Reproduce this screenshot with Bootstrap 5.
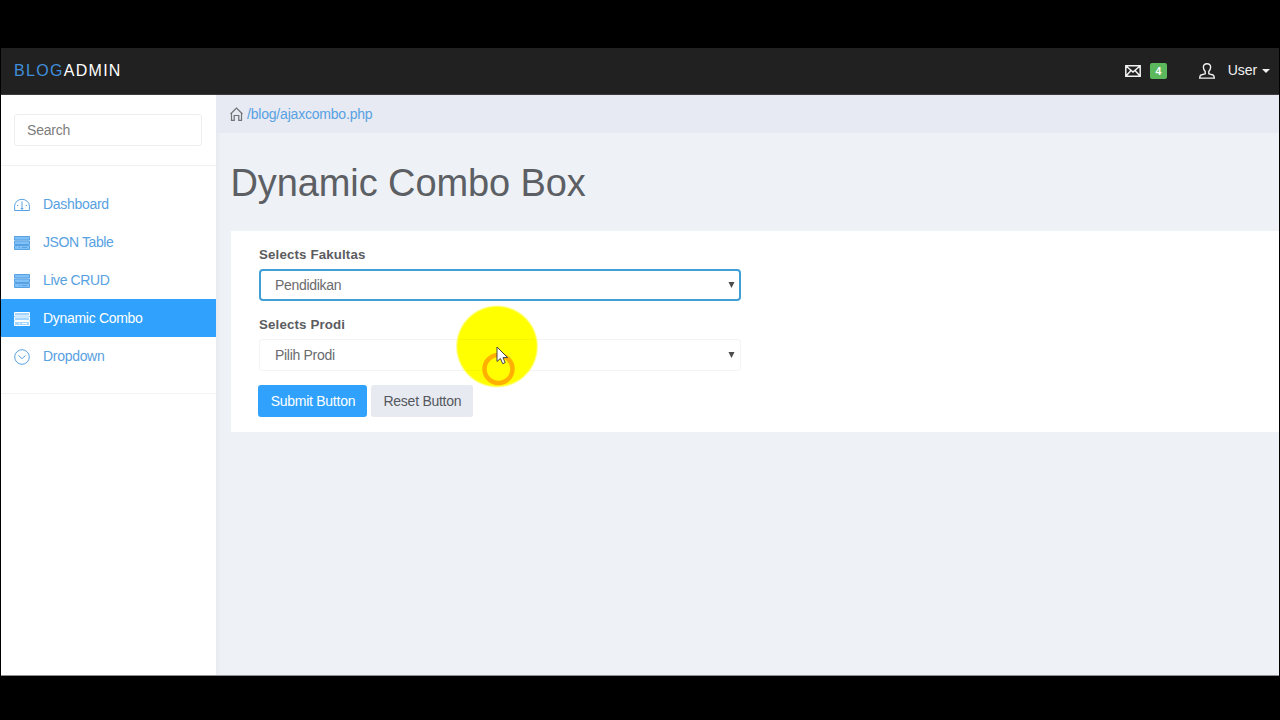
<!DOCTYPE html>
<html lang="en">
<head>
<meta charset="utf-8">
<meta name="viewport" content="width=device-width, initial-scale=1">
<title>Blog Admin - Dynamic Combo Box</title>
<link href="https://cdn.jsdelivr.net/npm/bootstrap@5.3.0/dist/css/bootstrap.min.css" rel="stylesheet">
<style>
body{background:#000;height:720px;overflow:hidden;padding:48px 1px 44px;font:13.6px/20px "Liberation Sans",Arial,sans-serif;letter-spacing:-.06px;color:#58595d}
a{text-decoration:none;color:#58a1e2}
svg{flex:none;display:block}
.app-frame{height:628px;background:#eef1f6;border-bottom:1px solid #8d9090}
.topbar{height:47px;background:#212121;border-bottom:1px solid #3b3b3b;color:#f2f2f2;padding:0 9px 0 13px}
.brand{font-size:16px;letter-spacing:1.3px;color:#fff}
.brand span{color:#408edb}
.tools{margin-top:-2px;font-size:14px;letter-spacing:-.1px}
.count{width:17px;height:16px;border-radius:2px;background:#5cb85c;font-size:10.5px;line-height:16px;color:#fff;font-weight:700;margin:2px 0 0 9px}
.tools .mail{margin-top:2px}
.tools .person{margin:2px 13px 0 32px}
.caret{border:4px solid transparent;border-top-color:#f2f2f2;border-bottom:0;margin:2px 0 0 5px}
.side{width:215px;background:#fff}
.search-wrap{padding:19px 14px 19px 13px;border-bottom:1px solid #f0f1f2;height:71px}
.search-wrap .form-control{height:32px;padding:0 12px;font-size:14px;letter-spacing:-.2px;border:1px solid #ecedef;border-radius:3px;color:#777}
.search-wrap .form-control::placeholder{color:#7d7d7d;opacity:1}
.menu{padding:19px 0 18px;border-bottom:1px solid #f4f4f4}
.menu .nav-link{height:38px;padding:0 13px;color:#58a1e2;gap:13px;font-size:14px;letter-spacing:-.3px}
.menu .nav-link:nth-child(2),.menu .nav-link:nth-child(3){letter-spacing:-.4px}
.menu .nav-link.active{background:#30a2fd;color:#fff}
.menu svg{margin-top:2px}
.menu .table-icon{--bar:#7fc0f6;margin-top:1px}
.menu .active .table-icon{--bar:#a5d6ff}
.main-pane{min-width:0;box-shadow:inset 4px 0 4px -2px #e7e9ee}
.crumb{height:38px;background:#e7eaf2;padding-left:14px;gap:4px;font-size:14px;letter-spacing:-.2px}
.page-title{font-size:38px;line-height:44px;letter-spacing:-.1px;font-weight:400;color:#5c5f64;margin:28px 0 26px 14.5px}
.panel{margin-left:15px;height:201px;background:#fff;padding:14px 0 0 28px}
.panel label{display:block;font-weight:700;line-height:20px;letter-spacing:.14px;margin-bottom:4px;font-size:13.3px;color:#5b5c60}
.combo{width:482px;height:32px;border:1px solid #f3f4f5;border-radius:3px;padding:0 5px 0 15px;color:#6a6b6e;font-size:14px;letter-spacing:-.3px}
.combo.focused{border:2px solid #429fd5;border-radius:4px;padding:0 4px 0 14px}
.combo+label,.actions{margin-top:14px}
.actions{margin-left:-.6px}
.panel .btn{height:32px;font-size:14px;line-height:20px;padding:0;white-space:nowrap;border:0;border-radius:3px;letter-spacing:-.26px}
.btn-send{background:#30a2fd!important;color:#fff!important;width:109px}
.btn-clear{background:#e7eaf1!important;color:#55585e!important;width:102px}
.pointer-mark{position:absolute;left:455px;top:304px;pointer-events:none}
</style>
</head>
<body>
<div class="app-frame d-flex flex-column">
  <header class="topbar d-flex align-items-center justify-content-between flex-shrink-0">
    <a class="brand" href="#"><span>BLOG</span>ADMIN</a>
    <div class="tools d-flex align-items-center">
      <svg class="mail" width="16" height="12" viewBox="0 0 16 12" fill="none" stroke="#f2f2f2" stroke-width="1.5"><path d="M.8.8h14.4v10.4H.8zM1 1l7 6 7-6M1 11l5-5.5M15 11l-5-5.5"/></svg>
      <span class="count text-center">4</span>
      <svg class="person" width="16" height="16" viewBox="0 0 16 16" fill="none" stroke="#f2f2f2" stroke-width="1.4"><path d="M8 .7C5.500.7 4.300 2.100 4.400 4.200c.1 2 .8 3.400 1.800 4.300v2.300L2 12c-.9.3-1.200.9-1.300 3.100h14.600c-.1-2.200-.4-2.800-1.300-3.100l-4.200-1.200V8.500c1-.9 1.700-2.300 1.800-4.300C11.700 2.100 10.500.7 8 .7z"/></svg>
      <span>User</span><span class="caret"></span>
    </div>
  </header>
  <div class="d-flex flex-grow-1">
    <aside class="side flex-shrink-0">
      <div class="search-wrap"><input class="form-control shadow-none" type="text" placeholder="Search" aria-label="Search"></div>
      <nav class="menu nav flex-column">
        <a class="nav-link d-flex align-items-center" href="#"><svg width="16" height="16" viewBox="0 0 16 16" fill="none" stroke="currentColor"><path d="M.6 13.500h14.800V9.100a7.400 6.800 0 0 0-14.800 0zM8 4.500V13M6.700 11.500h2.600M3 8.500h1.200M11.800 8.500H13" stroke-linejoin="round"/></svg>Dashboard</a>
        <a class="nav-link d-flex align-items-center" href="#"><svg class="table-icon" width="16" height="14" viewBox="0 0 16 14"><use href="#rows"/></svg>JSON Table</a>
        <a class="nav-link d-flex align-items-center" href="#"><svg class="table-icon" width="16" height="14" viewBox="0 0 16 14"><use href="#rows"/></svg>Live CRUD</a>
        <a class="nav-link active d-flex align-items-center" href="#"><svg class="table-icon" width="16" height="14" viewBox="0 0 16 14"><use href="#rows"/></svg>Dynamic Combo</a>
        <a class="nav-link d-flex align-items-center" href="#"><svg width="16" height="16" viewBox="0 0 16 16" fill="none" stroke="currentColor"><circle cx="8" cy="8" r="7.300"/><path d="M4.500 6.500 8 9.700l3.500-3.200"/></svg>Dropdown</a>
      </nav>
    </aside>
    <main class="main-pane flex-grow-1">
      <div class="crumb d-flex align-items-center">
        <svg width="13" height="14" viewBox="0 0 13 14" fill="none" stroke="#707276" stroke-width="1.200"><path d="M.5 7 6.500 1l6 6M1.500 6.200v7.200h2.700V8.500h4.600v4.900h2.700V6.200"/></svg>
        <a href="#">/blog/ajaxcombo.php</a>
      </div>
      <h1 class="page-title">Dynamic Combo Box</h1>
      <section class="panel">
        <label>Selects Fakultas</label>
        <div class="combo focused d-flex align-items-center justify-content-between"><span>Pendidikan</span><svg width="7" height="6" viewBox="0 0 7 6"><path d="M.5 0h6l-3 6z" fill="#4b4b4b"/></svg></div>
        <label>Selects Prodi</label>
        <div class="combo d-flex align-items-center justify-content-between"><span>Pilih Prodi</span><svg width="7" height="6" viewBox="0 0 7 6"><path d="M.5 0h6l-3 6z" fill="#4b4b4b"/></svg></div>
        <div class="actions d-flex gap-1"><button class="btn btn-send" type="button">Submit Button</button><button class="btn btn-clear" type="button">Reset Button</button></div>
      </section>
    </main>
  </div>
</div>
<svg width="0" height="0" class="position-absolute"><defs><g id="rows" fill="none" stroke="currentColor"><path style="fill:var(--bar)" d="M.5.500h15v3.500H.5zM.5 5h15v3.500H.5zM.5 9.500h15v4H.5z"/><path d="M5 11.500h1M8 11.500h5"/></g></defs></svg>
<svg class="pointer-mark" width="84" height="84" viewBox="455 304 84 84">
  <defs><radialGradient id="glow"><stop offset=".94" stop-color="#ff0"/><stop offset="1" stop-color="#ff0" stop-opacity="0"/></radialGradient></defs>
  <circle cx="497" cy="346.500" r="41.500" fill="url(#glow)"/>
  <path d="M459 339.500h76M466 370.500h18" stroke="#f8f400" stroke-width="1"/>
  <circle cx="498.500" cy="369" r="14" fill="none" stroke="#ffb000" stroke-width="4.500"/>
  <path d="M497 347v14.500l3.400-3 2.300 5.200 2.500-1.100-2.200-5h4.600z" fill="#fff" stroke="#45453c" stroke-width="1"/>
</svg>
<script src="https://cdn.jsdelivr.net/npm/bootstrap@5.3.0/dist/js/bootstrap.bundle.min.js"></script>
</body>
</html>
